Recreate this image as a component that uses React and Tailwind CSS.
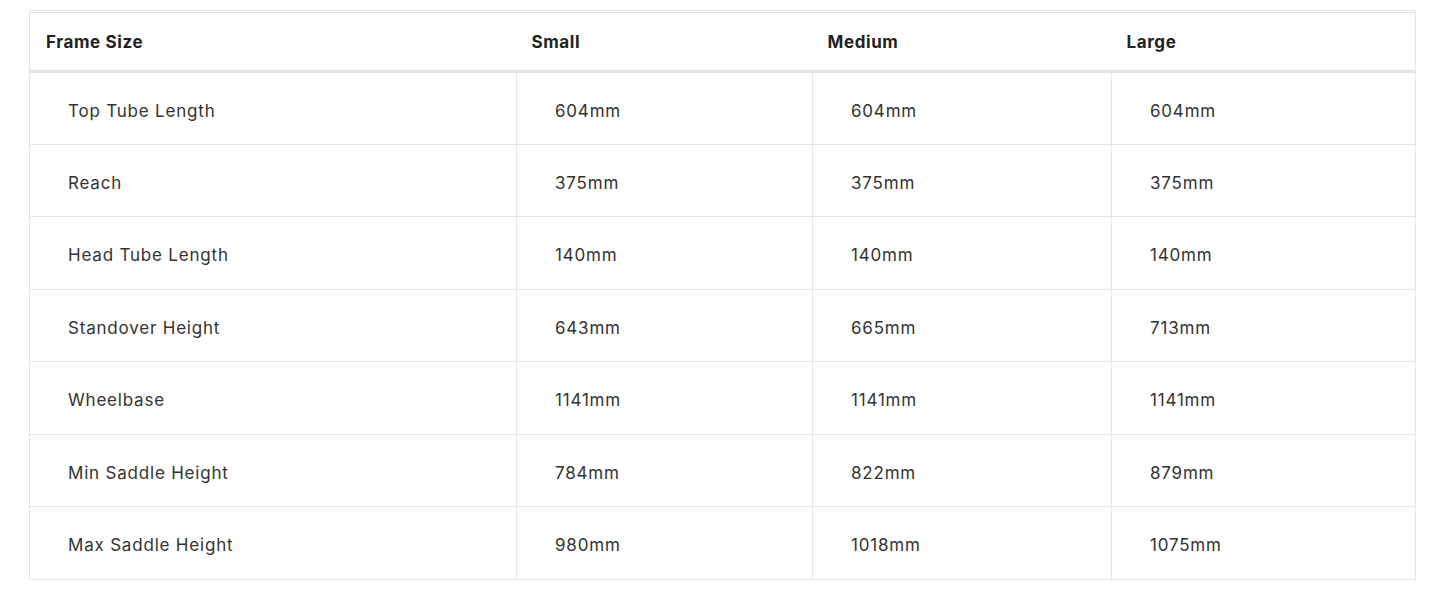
const sizes = ['Small', 'Medium', 'Large'];

const rows = [
    {label: 'Top Tube Length', values: ['604mm', '604mm', '604mm']},
    {label: 'Reach', values: ['375mm', '375mm', '375mm']},
    {label: 'Head Tube Length', values: ['140mm', '140mm', '140mm']},
    {label: 'Standover Height', values: ['643mm', '665mm', '713mm']},
    {label: 'Wheelbase', values: ['1141mm', '1141mm', '1141mm']},
    {label: 'Min Saddle Height', values: ['784mm', '822mm', '879mm']},
    {label: 'Max Saddle Height', values: ['980mm', '1018mm', '1075mm']},
];

export default function App() {
    return (
        <div className="min-h-screen bg-white pt-[10px] pl-[29px]" style={{fontFamily: 'Inter, "Noto Sans", sans-serif'}}>
            <div className="w-[1387px] border-t border-[#e6e6e6] pt-px">
                <table className="w-full border-collapse table-fixed border border-[#e6e6e6]">
                    <colgroup>
                        <col className="w-[487px]"/>
                        <col className="w-[296px]"/>
                        <col className="w-[299px]"/>
                        <col/>
                    </colgroup>
                    <thead>
                        <tr className="h-[59px] border-b-[3px] border-[#e3e3e3]">
                            <th className="pl-[16px] pt-[2px] text-left text-[17px] font-bold tracking-[0.6px] text-[#222]">Frame Size</th>
                            {sizes.map((s) => (
                                <th key={s} className="pl-[15px] pt-[2px] text-left text-[17px] font-bold tracking-[0.6px] text-[#222]">{s}</th>
                            ))}
                        </tr>
                    </thead>
                    <tbody>
                        {rows.map((row) => (
                            <tr key={row.label} className="h-[72.5px] border-b border-[#e6e6e6]">
                                <td className="pl-[38px] pt-[6px] text-[17px] tracking-[0.8px] text-[#333]">{row.label}</td>
                                {row.values.map((v, i) => (
                                    <td key={i} className="pl-[38px] pt-[6px] border-l border-[#e6e6e6] text-[17px] tracking-[0.8px] text-[#333]">{v}</td>
                                ))}
                            </tr>
                        ))}
                    </tbody>
                </table>
            </div>
        </div>
    );
}
